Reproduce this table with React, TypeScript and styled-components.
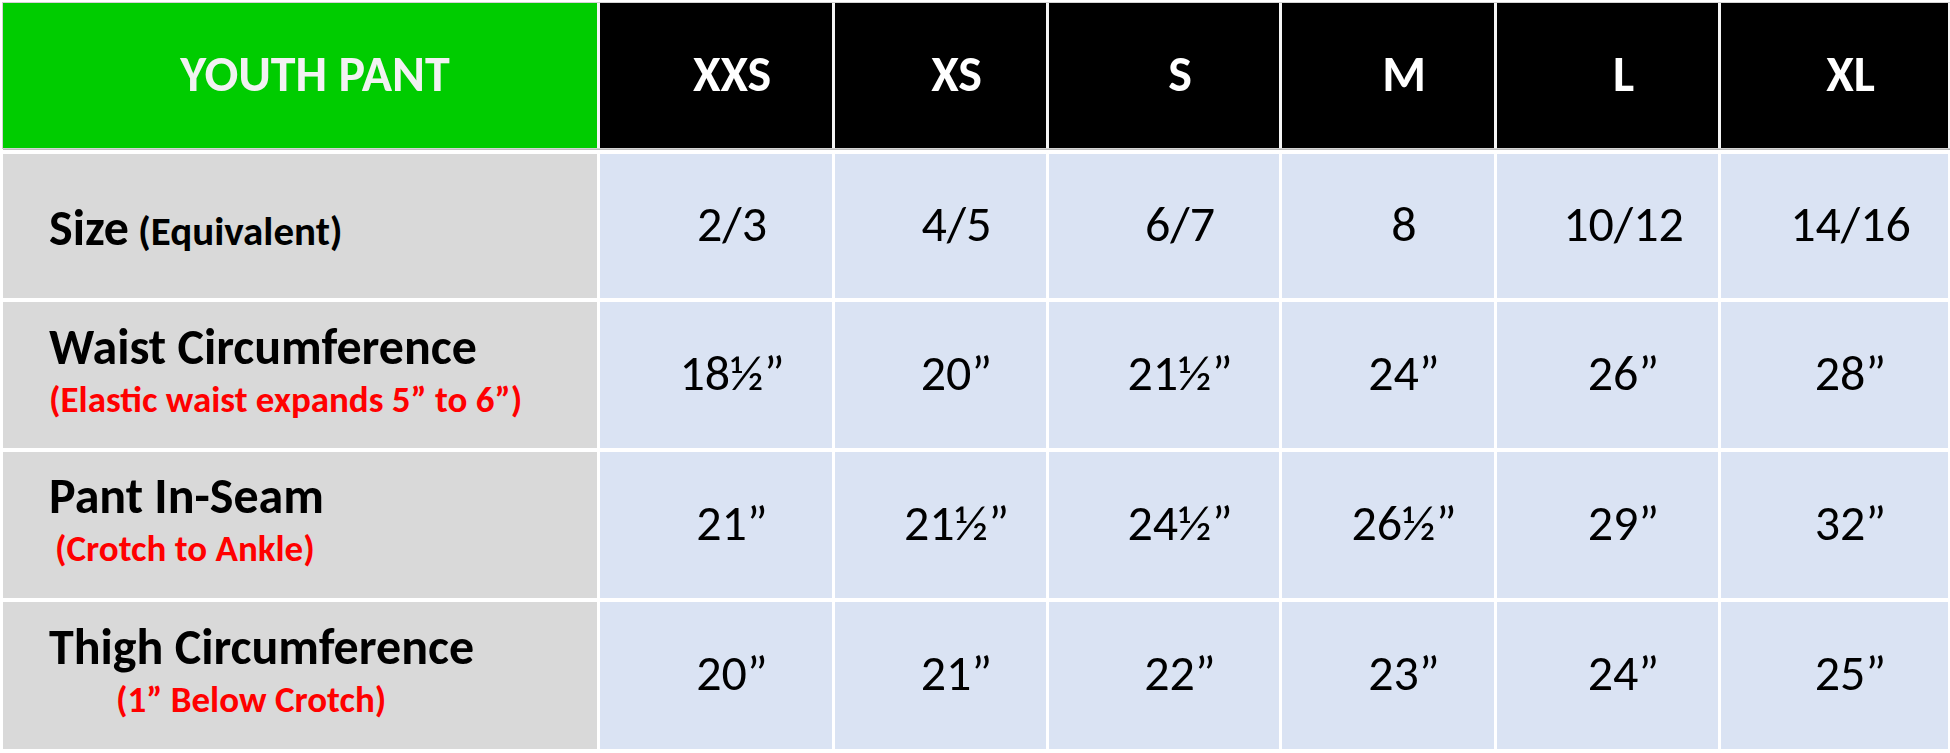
import styled, { createGlobalStyle } from 'styled-components';

const GlobalStyle = createGlobalStyle`
    html, body {
        margin: 0;
        padding: 0;
        background: #fff;
        overflow: hidden;
    }
    body {
        font-family: Calibri, Carlito, "Open Sans", Lato, sans-serif;
    }
`;

const COLUMNS = '594px 232px 211px 230px 212px 221px 227px';

const Chart = styled.div`
    display: flex;
    flex-direction: column;
    gap: 4px;
    padding: 3px 0 0 3px;
    width: 1950px;
    height: 753px;
    box-sizing: border-box;
`;

const HeaderRow = styled.div`
    display: grid;
    grid-template-columns: ${COLUMNS};
    column-gap: 3px;
    height: 145px;
    margin-bottom: 2px;
    box-shadow: 0 0 0 1px #d4d4d4, 0 2px 0 #bdbdbd;
    background: #f4f4f4;
`;

const Row = styled.div<{ h: number }>`
    display: grid;
    grid-template-columns: ${COLUMNS};
    column-gap: 3px;
    height: ${p => p.h}px;
`;

const TitleCell = styled.div`
    background: #00cc00;
    color: #f2f2f2;
    display: flex;
    align-items: center;
    justify-content: center;
    padding: 0 0 5px 30px;
    font-size: 50px;
    font-weight: 700;
`;

const SizeCell = styled.div`
    background: #000;
    color: #fff;
    display: flex;
    align-items: center;
    justify-content: center;
    padding: 0 0 5px 32px;
    font-size: 50px;
    font-weight: 700;
`;

const LabelCell = styled.div<{ lift: number }>`
    background: #d9d9d9;
    color: #000;
    display: flex;
    flex-direction: column;
    justify-content: center;
    padding-left: 46px;
    padding-top: ${p => Math.max(0, -p.lift)}px;
    padding-bottom: ${p => Math.max(0, p.lift)}px;
`;

const LabelMain = styled.div`
    font-size: 50px;
    font-weight: 700;
    line-height: 61px;
    white-space: nowrap;
`;

const LabelAside = styled.span`
    font-size: 41px;
    margin-left: 9px;
`;

const LabelNote = styled.div<{ indent: number }>`
    color: #ff0000;
    font-size: 37px;
    font-weight: 700;
    line-height: 45px;
    padding-left: ${p => p.indent}px;
    white-space: nowrap;
`;

const ValueCell = styled.div`
    background: #dae3f3;
    color: #000;
    display: flex;
    align-items: center;
    justify-content: center;
    padding: 0 0 6px 32px;
    font-size: 50px;
`;

const sizes = ['XXS', 'XS', 'S', 'M', 'L', 'XL'];

type Measure = {
    label: string;
    aside?: string;
    note?: string;
    indent?: number;
    lift: number;
    h: number;
    values: string[];
};

const measures: Measure[] = [
    { label: 'Size', aside: '(Equivalent)', lift: -6, h: 144, values: ['2/3', '4/5', '6/7', '8', '10/12', '14/16'] },
    {
        label: 'Waist Circumference',
        note: '(Elastic waist expands 5\u201D to 6\u201D)',
        indent: -2,
        lift: 13,
        h: 146,
        values: ['18\u00BD\u201D', '20\u201D', '21\u00BD\u201D', '24\u201D', '26\u201D', '28\u201D'],
    },
    {
        label: 'Pant In-Seam',
        note: '(Crotch to Ankle)',
        indent: 6,
        lift: 14,
        h: 146,
        values: ['21\u201D', '21\u00BD\u201D', '24\u00BD\u201D', '26\u00BD\u201D', '29\u201D', '32\u201D'],
    },
    {
        label: 'Thigh Circumference',
        note: '(1\u201D Below Crotch)',
        indent: 67,
        lift: 14,
        h: 147,
        values: ['20\u201D', '21\u201D', '22\u201D', '23\u201D', '24\u201D', '25\u201D'],
    },
];

const App = () => {
    return (
        <>
            <GlobalStyle />
            <Chart>
                <HeaderRow>
                    <TitleCell>YOUTH PANT</TitleCell>
                    {sizes.map(s => (
                        <SizeCell key={s}>{s}</SizeCell>
                    ))}
                </HeaderRow>
                {measures.map(m => (
                    <Row key={m.label} h={m.h}>
                        <LabelCell lift={m.lift}>
                            <LabelMain>
                                {m.label}
                                {m.aside && <LabelAside>{m.aside}</LabelAside>}
                            </LabelMain>
                            {m.note && <LabelNote indent={m.indent ?? 0}>{m.note}</LabelNote>}
                        </LabelCell>
                        {m.values.map((v, i) => (
                            <ValueCell key={i}>{v}</ValueCell>
                        ))}
                    </Row>
                ))}
            </Chart>
        </>
    );
};

export default App;
